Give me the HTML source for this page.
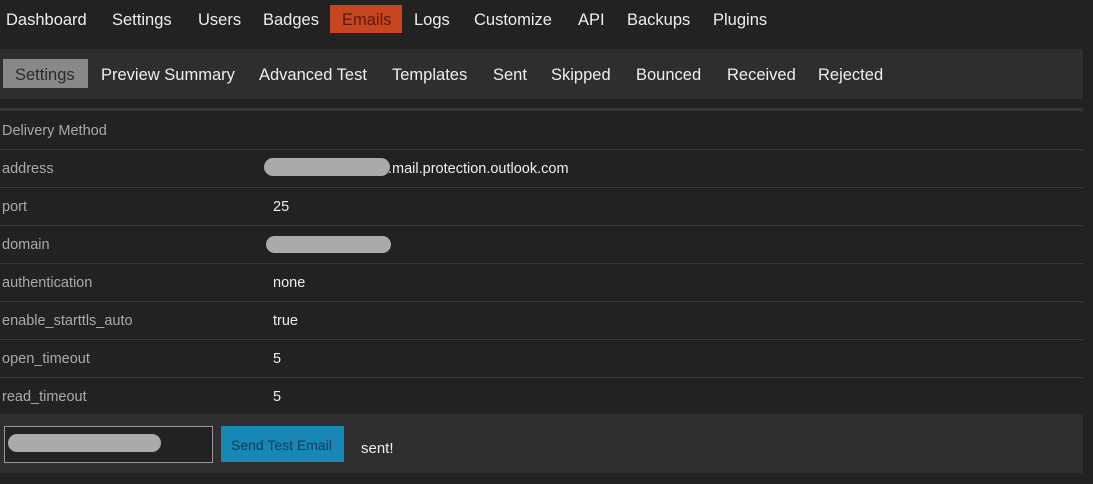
<!DOCTYPE html>
<html><head><style>
body{margin:0;width:1093px;height:484px;background:#222;font-family:"Liberation Sans",sans-serif;overflow:hidden;position:relative}
.a{position:absolute;white-space:nowrap}
.n{font-size:16.5px;color:#eee;top:11px}
.s{font-size:16.5px;color:#eee;top:66px}
.l{font-size:14.5px;color:#aaa;left:2px}
.v{font-size:14.5px;color:#eee;left:273px}
.line{position:absolute;left:0;width:1083px;height:1px;background:#3a3a3a}
.blob{position:absolute;background:#aaa;border-radius:10px}
</style></head><body>
<div class="a" style="left:330px;top:5px;width:72px;height:28px;background:#c8461f"></div>
<div class="a n" style="left:6px">Dashboard</div>
<div class="a n" style="left:112px">Settings</div>
<div class="a n" style="left:198px">Users</div>
<div class="a n" style="left:263px">Badges</div>
<div class="a n" style="left:342px;color:#5a1a08">Emails</div>
<div class="a n" style="left:414px">Logs</div>
<div class="a n" style="left:474px">Customize</div>
<div class="a n" style="left:578px">API</div>
<div class="a n" style="left:627px">Backups</div>
<div class="a n" style="left:713px">Plugins</div>
<div class="a" style="left:0;top:49px;width:1083px;height:50px;background:#2e2e2e"></div>
<div class="a" style="left:3px;top:59px;width:85px;height:29px;background:#888"></div>
<div class="a s" style="left:15px;color:#2a2a2a">Settings</div>
<div class="a s" style="left:101px">Preview Summary</div>
<div class="a s" style="left:259px">Advanced Test</div>
<div class="a s" style="left:392px">Templates</div>
<div class="a s" style="left:493px">Sent</div>
<div class="a s" style="left:551px">Skipped</div>
<div class="a s" style="left:636px">Bounced</div>
<div class="a s" style="left:727px">Received</div>
<div class="a s" style="left:818px">Rejected</div>
<div class="a" style="left:0;top:108px;width:1083px;height:3px;background:#363636"></div>
<div class="a l" style="top:123px">Delivery Method</div>
<div class="line" style="top:149px"></div>
<div class="line" style="top:187px"></div>
<div class="line" style="top:225px"></div>
<div class="line" style="top:263px"></div>
<div class="line" style="top:301px"></div>
<div class="line" style="top:339px"></div>
<div class="line" style="top:377px"></div>
<div class="a l" style="top:161px">address</div><div class="a v" style="left:388px;top:161px">.mail.protection.outlook.com</div>
<div class="blob" style="left:264px;top:158px;width:126px;height:18px"></div>
<div class="a l" style="top:199px">port</div><div class="a v" style="top:199px">25</div>
<div class="a l" style="top:237px">domain</div>
<div class="blob" style="left:266px;top:236px;width:125px;height:17px"></div>
<div class="a l" style="top:275px">authentication</div><div class="a v" style="top:275px">none</div>
<div class="a l" style="top:313px">enable_starttls_auto</div><div class="a v" style="top:313px">true</div>
<div class="a l" style="top:351px">open_timeout</div><div class="a v" style="top:351px">5</div>
<div class="a l" style="top:389px">read_timeout</div><div class="a v" style="top:389px">5</div>
<div class="a" style="left:0;top:414px;width:1083px;height:59px;background:#2f2f2f"></div>
<div class="a" style="left:4px;top:426px;width:207px;height:35px;border:1px solid #999;background:#222"></div>
<div class="blob" style="left:8px;top:434px;width:153px;height:18px"></div>
<div class="a" style="left:221px;top:426px;width:123px;height:36px;background:#1787b5"></div>
<div class="a" style="left:231px;top:437px;font-size:14px;color:#163a52">Send Test Email</div>
<div class="a" style="left:361px;top:440px;font-size:15px;color:#eee">sent!</div>
</body></html>
